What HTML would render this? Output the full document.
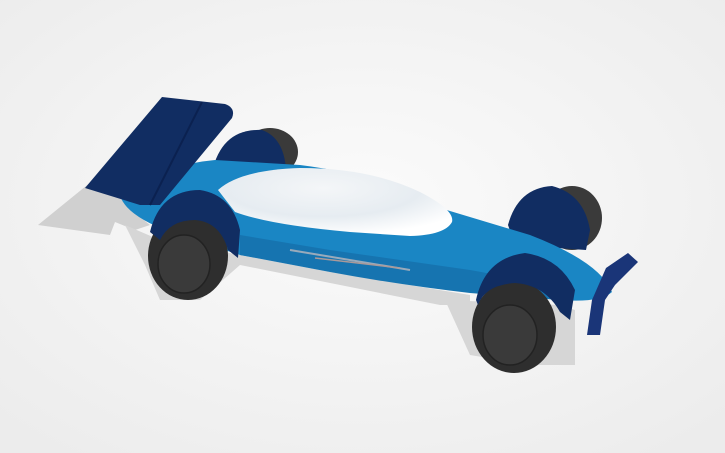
<!DOCTYPE html>
<html><head><style>
html,body{margin:0;padding:0;width:725px;height:453px;overflow:hidden;background:#f3f3f3}
</style></head><body>
<svg width="725" height="453" viewBox="0 0 725 453" xmlns="http://www.w3.org/2000/svg">
<defs>
<radialGradient id="bg" cx="0.5" cy="0.45" r="0.7">
<stop offset="0" stop-color="#fbfbfb"/><stop offset="1" stop-color="#ececec"/></radialGradient>
<radialGradient id="dome" cx="0.45" cy="0.3" r="0.7">
<stop offset="0" stop-color="#f4f6f8"/><stop offset="0.6" stop-color="#e6ecf1"/><stop offset="1" stop-color="#ffffff"/></radialGradient>
</defs>
<rect width="725" height="453" fill="url(#bg)"/>
<!-- shadow -->
<path d="M38,225 L118,160 L125,205 L150,225 L135,230 L115,222 L110,235 Z" fill="#d0d0d0"/>
<path d="M125,225 L160,240 L240,255 L330,272 L470,295 L470,305 L440,305 L240,265 L200,300 L160,300 L145,265 Z" fill="#d6d6d6"/>
<path d="M445,300 L560,305 L575,310 L575,365 L530,365 L470,355 Z" fill="#d6d6d6"/>
<!-- rear top wheel -->
<ellipse cx="270" cy="152" rx="28" ry="24" fill="#3a3a3a"/>
<path d="M212,172 Q222,128 262,130 Q284,138 286,170 L282,190 L215,187 Z" fill="#112d62"/>
<!-- rear right wheel -->
<ellipse cx="572" cy="218" rx="30" ry="32" fill="#3a3a3a"/>
<path d="M508,225 Q518,188 552,186 Q584,194 590,230 L586,250 L515,245 Z" fill="#112d62"/>
<!-- body -->
<path d="M120,195 Q160,165 215,160 L300,165 Q380,175 430,205 L530,235 Q600,262 612,292 Q600,303 560,300 L470,292 Q400,285 330,270 L240,255 L170,232 Q125,215 120,195 Z" fill="#1a86c4"/>
<path d="M240,255 L330,272 Q400,285 470,293 L560,300 Q540,282 470,270 L330,250 L240,235 Z" fill="#1674b0"/>
<path d="M290,250 L410,270" stroke="#9ab" stroke-width="2"/>
<path d="M315,258 L400,268" stroke="#a99" stroke-width="1.5"/>
<!-- dome -->
<path d="M218,190 Q240,170 300,168 Q370,168 420,192 Q455,210 452,222 Q445,235 410,236 L350,232 Q270,225 235,212 Z" fill="url(#dome)"/>
<!-- rear wing -->
<path d="M162,97 L225,104 Q236,108 232,118 L160,205 L140,205 L85,188 Z" fill="#112d62"/>
<path d="M202,102 L150,205" stroke="#0b2150" stroke-width="2"/>
<!-- left front wheel -->
<ellipse cx="188" cy="256" rx="40" ry="44" fill="#2e2e2e"/>
<ellipse cx="184" cy="264" rx="26" ry="29" fill="#3a3a3a" stroke="#222" stroke-width="1.5"/>
<path d="M150,232 Q160,190 200,190 Q232,195 240,230 L238,258 L228,250 Q220,222 195,220 Q170,220 160,240 Z" fill="#112d62"/>
<!-- front right housing & wheel -->
<ellipse cx="514" cy="327" rx="42" ry="46" fill="#2e2e2e"/>
<ellipse cx="510" cy="335" rx="27" ry="30" fill="#3a3a3a" stroke="#222" stroke-width="1.5"/>
<path d="M476,300 Q485,258 525,253 Q560,258 575,290 L570,320 L560,312 Q545,285 515,283 Q485,285 478,305 Z" fill="#112d62"/>
<!-- nose wing -->
<path d="M606,268 L628,253 L638,262 L615,285 L605,300 L600,335 L587,335 L592,300 Z" fill="#1a3578"/>
</svg>
</body></html>
